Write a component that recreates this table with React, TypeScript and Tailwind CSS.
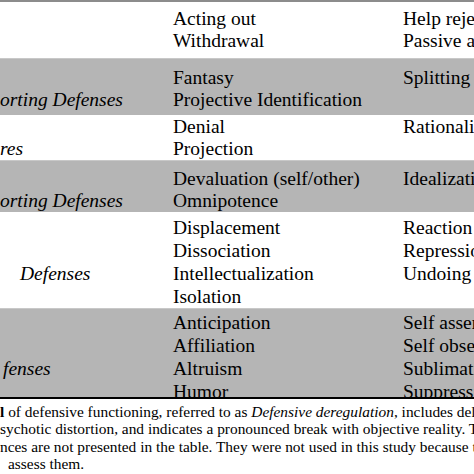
import React from 'react';

type Row = {
  label: string;
  labelLine: number;
  labelPad?: string;
  mid: string[];
  right: string[];
  shaded: boolean;
  box: string;
};

const rows: Row[] = [
  {
    label: '',
    labelLine: 1,
    mid: ['Acting out', 'Withdrawal'],
    right: ['Help rejecting complaining', 'Passive aggression'],
    shaded: false,
    box: 'h-[56px] pt-[6px] leading-[22px]',
  },
  {
    label: 'orting Defenses',
    labelLine: 1,
    mid: ['Fantasy', 'Projective Identification'],
    right: ['Splitting of self-image'],
    shaded: true,
    box: 'h-[57px] pt-[8px] leading-[22px]',
  },
  {
    label: 'res',
    labelLine: 1,
    mid: ['Denial', 'Projection'],
    right: ['Rationalization'],
    shaded: false,
    box: 'h-[45px] pt-[1px] leading-[22px]',
  },
  {
    label: 'orting Defenses',
    labelLine: 1,
    mid: ['Devaluation (self/other)', 'Omnipotence'],
    right: ['Idealization (self/other)'],
    shaded: true,
    box: 'h-[52px] pt-[7px] leading-[22px]',
  },
  {
    label: 'Defenses',
    labelLine: 2,
    labelPad: 'pl-[20px]',
    mid: ['Displacement', 'Dissociation', 'Intellectualization', 'Isolation'],
    right: ['Reaction formation', 'Repression', 'Undoing'],
    shaded: false,
    box: 'h-[96px] pt-[4px] leading-[23px]',
  },
  {
    label: 'fenses',
    labelLine: 2,
    labelPad: 'pl-[3px]',
    mid: ['Anticipation', 'Affiliation', 'Altruism', 'Humor'],
    right: ['Self assertion', 'Self observation', 'Sublimation', 'Suppression'],
    shaded: true,
    box: 'h-[89px] pt-[2px] leading-[23px]',
  },
];

export default function App() {
  return (
    <div className="w-[474px] h-[474px] overflow-hidden bg-white text-black font-['Liberation_Serif','Times_New_Roman',serif]">
      <div className="h-[2px] bg-[#8c8c8c]" />

      {/* table body */}
      <div className="text-[19.5px]">
        {rows.map((row, i) => (
          <div
            key={i}
            className={`flex whitespace-nowrap ${row.box} ${row.shaded ? 'bg-[#b5b5b5] border-t border-[#c8c8c8]' : 'bg-white'}`}
          >
            <div className={`w-[173px] shrink-0 overflow-hidden italic ${row.labelPad ?? ''}`}>
              {Array.from({ length: row.mid.length }).map((_, j) => (
                <div key={j}>{j === row.labelLine ? row.label : '\u00a0'}</div>
              ))}
            </div>
            <div className="w-[230px] shrink-0">
              {row.mid.map((t) => (
                <div key={t}>{t}</div>
              ))}
            </div>
            <div className="flex-1 overflow-hidden">
              {row.right.map((t) => (
                <div key={t}>{t}</div>
              ))}
            </div>
          </div>
        ))}
      </div>

      <div className="h-[2px] bg-black" />

      {/* footnote */}
      <div className="pt-[4px] text-[15.4px] leading-[17.3px] whitespace-nowrap">
        <div>
          <span className="font-bold">l</span> of defensive functioning, referred to as{' '}
          <span className="italic">Defensive deregulation</span>, includes delusional projection
        </div>
        <div>sychotic distortion, and indicates a pronounced break with objective reality. The</div>
        <div>nces are not presented in the table. They were not used in this study because the</div>
        <div className="pl-[8px]">assess them.</div>
      </div>
    </div>
  );
}
